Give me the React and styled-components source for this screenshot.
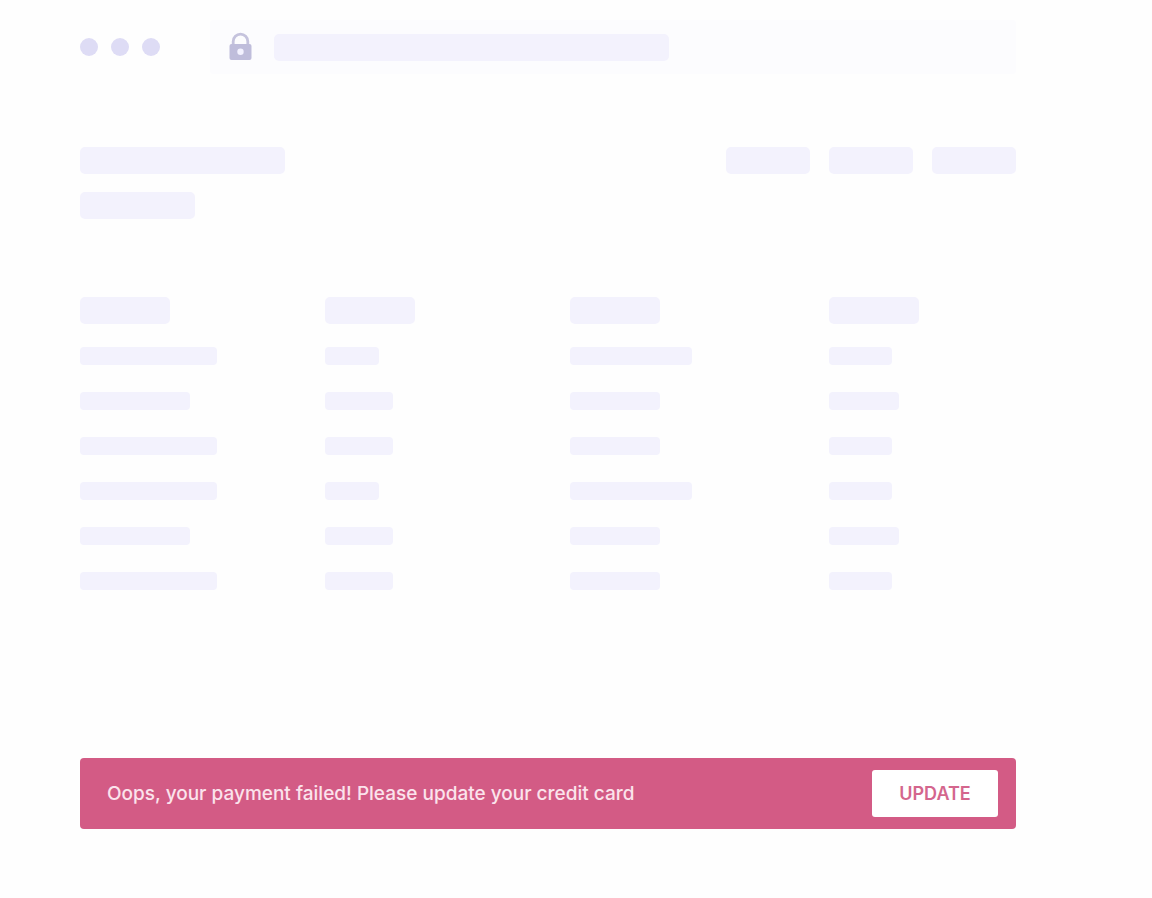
import React from "react";
import styled, { createGlobalStyle } from "styled-components";

const GlobalStyle = createGlobalStyle`
  *, *::before, *::after { box-sizing: border-box; }
  body {
    margin: 0;
    background: #fefefe;
    font-family: Inter, "Liberation Sans", sans-serif;
  }
`;

const Page = styled.div`
  padding: 20px 136px 68px 80px;
`;

const BrowserBar = styled.header`
  display: flex;
  align-items: center;
  gap: 50px;
`;

const WindowDots = styled.div`
  display: flex;
  gap: 13px;
`;

const Dot = styled.span`
  width: 18px;
  height: 18px;
  border-radius: 50%;
  background: #dedcf5;
`;

const AddressBar = styled.div`
  flex: 1;
  height: 54px;
  display: flex;
  align-items: center;
  gap: 22px;
  padding: 0 18px;
  border-radius: 4px;
  background: #fcfcfe;
`;

const LockIcon = styled.svg`
  flex: none;
  display: block;
  width: 24px;
  height: 30px;
`;

const Bar = styled.div`
  width: ${({ $width }) => $width}px;
  max-width: 100%;
  height: ${({ $thin }) => ($thin ? 18 : 27)}px;
  border-radius: ${({ $thin }) => ($thin ? 4 : 5)}px;
  background: #f3f2fd;
`;

const PageHeader = styled.section`
  display: flex;
  justify-content: space-between;
  align-items: flex-start;
  margin-top: 73px;
`;

const Titles = styled.div`
  display: flex;
  flex-direction: column;
  gap: 18px;
`;

const Actions = styled.div`
  display: flex;
  gap: 19px;
`;

const Columns = styled.section`
  display: grid;
  grid-template-columns: 245fr 245fr 259fr 187fr;
  margin-top: 78px;
`;

const Column = styled.div`
  display: flex;
  flex-direction: column;
  gap: 23px;
`;

const Cells = styled.div`
  display: flex;
  flex-direction: column;
  gap: 27px;
`;

const Alert = styled.div`
  display: flex;
  align-items: center;
  justify-content: space-between;
  margin-top: 168px;
  padding: 12px 18px 12px 27px;
  border-radius: 4px;
  background: #d35b85;
`;

const Message = styled.p`
  margin: 0;
  font-size: 19px;
  font-weight: 500;
  line-height: 24px;
  color: #fbe3ec;
`;

const UpdateButton = styled.button`
  min-width: 126px;
  height: 47px;
  padding: 0 24px;
  border: 0;
  border-radius: 3px;
  background: #fff;
  color: #d4668d;
  font-family: inherit;
  font-size: 18px;
  font-weight: 600;
  line-height: 24px;
  cursor: pointer;
`;

const columns = [
  [137, 110, 137, 137, 110, 137],
  [54, 68, 68, 54, 68, 68],
  [122, 90, 90, 122, 90, 90],
  [63, 70, 63, 63, 70, 63],
];

export default function App() {
  return (
    <>
      <GlobalStyle />
      <Page>
        <BrowserBar>
          <WindowDots>
            <Dot />
            <Dot />
            <Dot />
          </WindowDots>
          <AddressBar>
            <LockIcon viewBox="0 0 24 30" aria-hidden="true">
              <path
                d="M5.2 14V9.4a7.3 7.3 0 0 1 14.6 0V14"
                fill="none"
                stroke="#c5c3dd"
                strokeWidth="2.8"
              />
              <rect x="1.5" y="12" width="22" height="16" rx="2" fill="#bfbddb" />
              <circle cx="12.5" cy="19.8" r="3.2" fill="#f3f2ff" />
            </LockIcon>
            <Bar $width={395} />
          </AddressBar>
        </BrowserBar>

        <main>
          <PageHeader>
            <Titles>
              <Bar $width={205} />
              <Bar $width={115} />
            </Titles>
            <Actions>
              <Bar $width={84} />
              <Bar $width={84} />
              <Bar $width={84} />
            </Actions>
          </PageHeader>

          <Columns>
            {columns.map((cells, column) => (
              <Column key={column}>
                <Bar $width={90} />
                <Cells>
                  {cells.map((width, row) => (
                    <Bar key={row} $thin $width={width} />
                  ))}
                </Cells>
              </Column>
            ))}
          </Columns>

          <Alert role="alert">
            <Message>Oops, your payment failed! Please update your credit card</Message>
            <UpdateButton type="button">UPDATE</UpdateButton>
          </Alert>
        </main>
      </Page>
    </>
  );
}
